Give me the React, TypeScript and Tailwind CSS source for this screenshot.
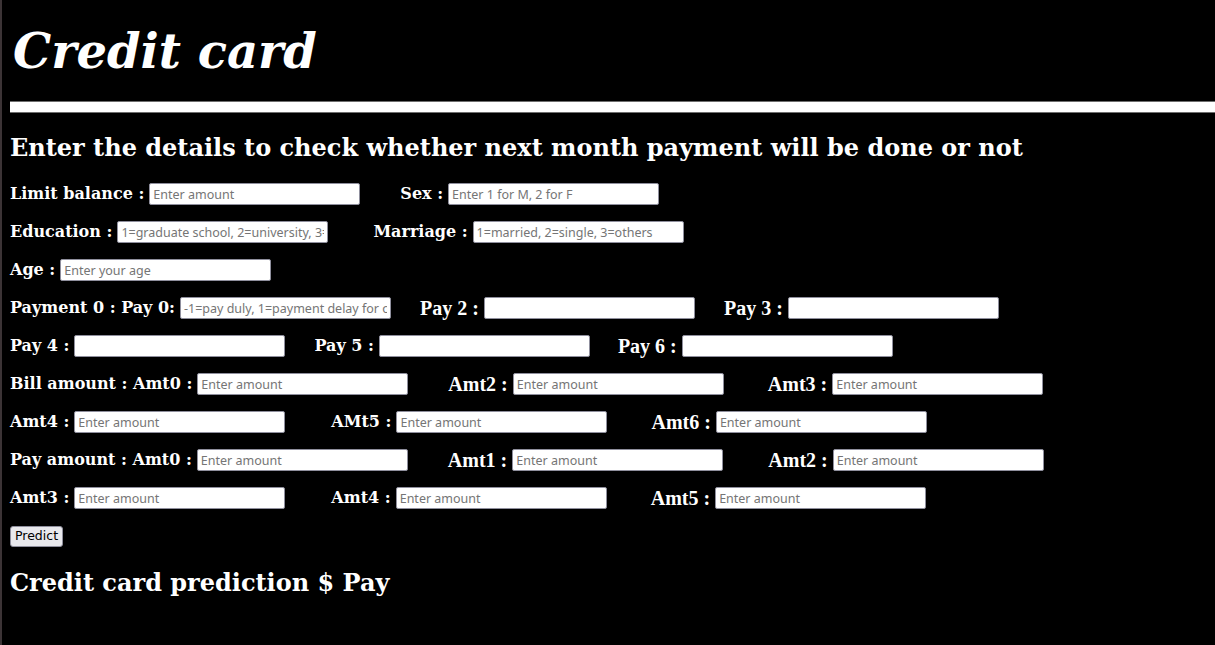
const dv = "font-['DejaVu_Serif',serif] font-bold text-[16px]";
const tm = "font-['Liberation_Serif',serif] font-bold text-[20px]";

type Field = { label: string; ph?: string; gap?: number; times?: boolean };

function Input({ ph }: { ph?: string }) {
  return (
    <input
      type="text"
      placeholder={ph}
      className="ml-[5px] h-[22px] w-[211px] rounded-[2px] border border-[#8f8f9d] bg-white px-[3px] font-['Noto_Sans',sans-serif] text-[12.5px] text-black placeholder:text-[#757575]"
    />
  );
}

function Row({ fields }: { fields: Field[] }) {
  return (
    <div className="flex h-[38px] items-center">
      {fields.map((f, i) => (
        <div key={i} className="flex items-center" style={{ marginLeft: f.gap ?? 0 }}>
          <span className={f.times ? tm : dv}>{f.label}</span>
          <Input ph={f.ph} />
        </div>
      ))}
    </div>
  );
}

const amt = 'Enter amount';

export default function App() {
  return (
    <div className="min-h-screen border-l-2 border-[#3c3436] bg-black pl-2 text-white">
      <h1 className="pt-[20px] pl-[3px] font-['DejaVu_Serif',serif] text-[48px] font-bold italic leading-[62px]">
        Credit card
      </h1>
      <div className="mt-[19px] h-[12px] border-y border-[#6e6e6e] bg-white" />
      <h2 className="mt-[19px] font-['DejaVu_Serif',serif] text-[24px] font-bold leading-[32px]">
        Enter the details to check whether next month payment will be done or not
      </h2>
      <div className="mt-[11px]">
        <Row
          fields={[
            { label: 'Limit balance :', ph: amt },
            { label: 'Sex :', ph: 'Enter 1 for M, 2 for F', gap: 40 },
          ]}
        />
        <Row
          fields={[
            { label: 'Education :', ph: '1=graduate school, 2=university, 3=high school, 4=others' },
            { label: 'Marriage :', ph: '1=married, 2=single, 3=others', gap: 45 },
          ]}
        />
        <Row fields={[{ label: 'Age :', ph: 'Enter your age' }]} />
        <Row
          fields={[
            { label: 'Payment 0 : Pay 0:', ph: '-1=pay duly, 1=payment delay for one month' },
            { label: 'Pay 2 :', gap: 29, times: true },
            { label: 'Pay 3 :', gap: 29, times: true },
          ]}
        />
        <Row
          fields={[
            { label: 'Pay 4 :' },
            { label: 'Pay 5 :', gap: 29 },
            { label: 'Pay 6 :', gap: 28, times: true },
          ]}
        />
        <Row
          fields={[
            { label: 'Bill amount : Amt0 :', ph: amt },
            { label: 'Amt2 :', ph: amt, gap: 40, times: true },
            { label: 'Amt3 :', ph: amt, gap: 44, times: true },
          ]}
        />
        <Row
          fields={[
            { label: 'Amt4 :', ph: amt },
            { label: 'AMt5 :', ph: amt, gap: 46 },
            { label: 'Amt6 :', ph: amt, gap: 44, times: true },
          ]}
        />
        <Row
          fields={[
            { label: 'Pay amount : Amt0 :', ph: amt },
            { label: 'Amt1 :', ph: amt, gap: 40, times: true },
            { label: 'Amt2 :', ph: amt, gap: 45, times: true },
          ]}
        />
        <Row
          fields={[
            { label: 'Amt3 :', ph: amt },
            { label: 'Amt4 :', ph: amt, gap: 46 },
            { label: 'Amt5 :', ph: amt, gap: 44, times: true },
          ]}
        />
        <div className="flex h-[38px] items-center">
          <button
            type="button"
            className="h-[21px] rounded-[3px] border border-[#8f8f9d] bg-[#e9e9ed] px-[4px] font-['DejaVu_Sans',sans-serif] text-[12.5px] text-black"
          >
            Predict
          </button>
        </div>
      </div>
      <h2 className="mt-[12px] font-['DejaVu_Serif',serif] text-[24px] font-bold leading-[32px]">
        Credit card prediction $ Pay
      </h2>
    </div>
  );
}
